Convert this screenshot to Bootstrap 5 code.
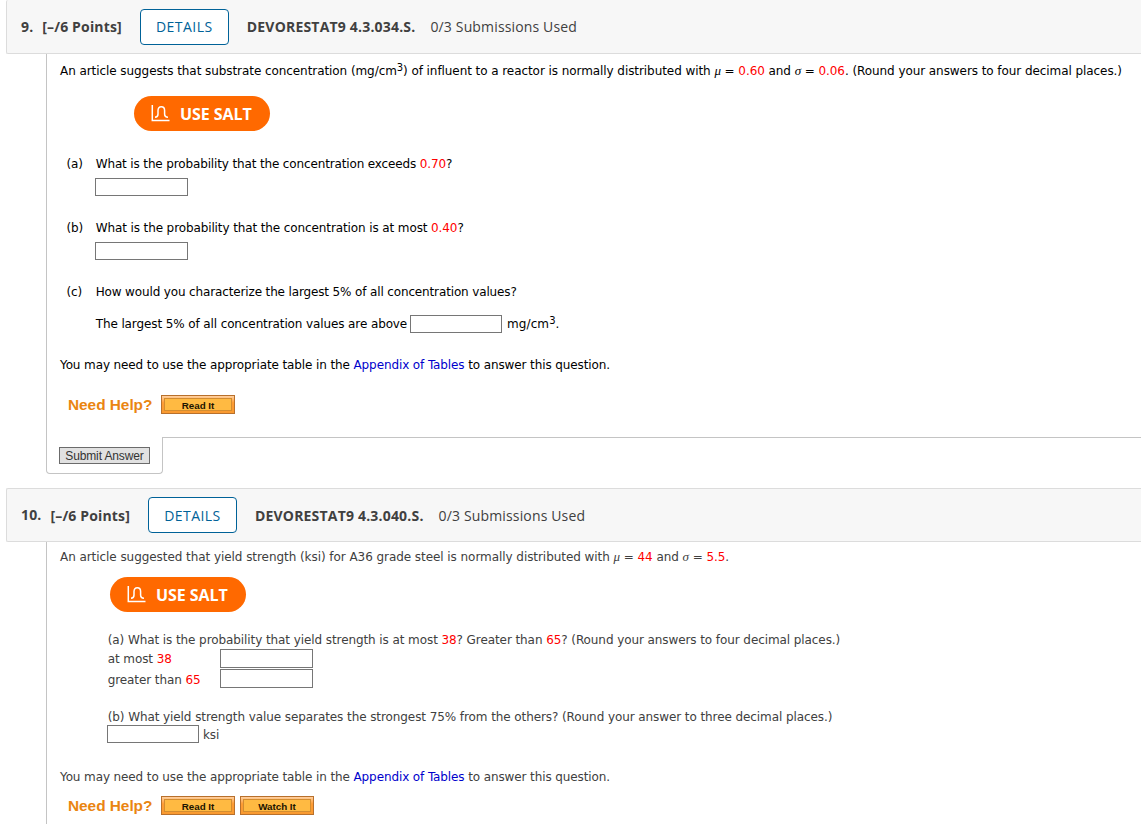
<!DOCTYPE html>
<html lang="en">
<head>
    <meta charset="UTF-8">
    <meta name="viewport" content="width=device-width, initial-scale=1.0">
    <title>Homework - Section 4.3</title>
    <!-- Bootstrap CSS -->
    <link href="https://cdn.jsdelivr.net/npm/bootstrap@5.3.0/dist/css/bootstrap.min.css" rel="stylesheet">
    <style>
        body {
            font-family: "DejaVu Sans", Verdana, sans-serif;
            font-size: 12px;
            line-height: 20px;
            color: #000;
            height: 824px;
            overflow: hidden;
        }
        .question {
            margin-left: 6px;
            white-space: nowrap;
        }
        .question-head {
            height: 54px;
            padding-left: 14px;
            background-color: #f7f7f7;
            border: 1px solid #dcdcdc;
            border-right: 0;
            border-radius: 2px 0 0 2px;
            font-family: "Open Sans", sans-serif;
            font-size: 14px;
            letter-spacing: .15px;
            color: #404040;
        }
        .question-first .question-head {
            border-top: 0;
        }
        .question-second .q-points,
        .question-second .q-code,
        .question-second .q-used {
            padding-top: 2px;
        }
        .q-num {
            margin-right: 9px;
        }
        .q-points {
            margin-right: 18px;
        }
        .btn-details {
            width: 89px;
            height: 36px;
            padding: 0;
            margin-right: 18px;
            border: 1px solid #006298;
            border-radius: 4px;
            background-color: #fff;
            color: #006298;
            font-size: 14px;
            letter-spacing: .45px;
        }
        .q-code {
            margin-right: 15px;
            letter-spacing: .19px;
        }
        .question-body {
            margin-left: 40px;
            padding-left: 13px;
            border-left: 1px solid #c4c4c4;
            letter-spacing: -.11px;
        }
        .body-first {
            height: 383px;
            padding-top: 7px;
        }
        .body-second {
            height: 282px;
            padding-top: 5px;
            color: #404040;
        }
        .stem-first {
            letter-spacing: -.07px;
        }
        .stem-second {
            letter-spacing: -.06px;
        }
        .val {
            color: #f00;
        }
        .sym {
            font-family: "Liberation Serif", serif;
            font-style: italic;
            font-size: 13px;
        }
        .unit-sup {
            font-size: 10px;
            line-height: 0;
            top: -.4em;
        }
        .question-body a {
            color: #00c;
            text-decoration: none;
        }
        .btn-salt {
            width: 136px;
            height: 35px;
            padding: 0 0 0 16.5px;
            border: 0;
            border-radius: 18px;
            background-color: #ff6900;
            color: #fff;
            font-family: "Open Sans", sans-serif;
            font-size: 16px;
            font-weight: 700;
            letter-spacing: -.05px;
        }
        .btn-salt svg {
            margin-right: 10px;
        }
        .salt-first {
            margin: 15px 0 23px 74.4px;
        }
        .salt-second {
            margin: 10px 0 18px 50.4px;
        }
        .part {
            margin: 0 0 22px 6px;
        }
        .part-label {
            width: 29px;
            padding-left: .5px;
        }
        .part-text {
            padding-left: .7px;
        }
        .part-a-text {
            letter-spacing: -.14px;
        }
        .part-c-text {
            letter-spacing: -.14px;
        }
        .part-c-line {
            margin-top: 12px;
        }
        .part-c-lead {
            width: 315px;
            padding-left: .7px;
        }
        .part-c-line .answer {
            margin-top: 1px;
            margin-right: 5px;
        }
        .part-c-unit {
            letter-spacing: .1px;
        }
        .note-first {
            margin-top: 21px;
        }
        .help-first {
            margin-top: 20px;
        }
        .answer {
            display: block;
            width: 93px;
            height: 18px;
            padding: 0;
            border: 1px solid #767676;
            border-radius: 0;
            background-color: #fff;
        }
        .answer-inline {
            width: 92px;
        }
        .answer-tall {
            height: 19px;
        }
        .sub-parts {
            margin-left: 47px;
            letter-spacing: -.085px;
        }
        .row-label {
            width: 113px;
            padding-left: .7px;
        }
        .row-most {
            height: 20px;
            margin-top: -1px;
        }
        .row-greater .row-label {
            padding-top: 1px;
        }
        .sub-b {
            margin-top: 17px;
        }
        .sub-b-line {
            margin-top: -2px;
        }
        .note-second {
            margin-top: 22px;
        }
        .help-second {
            margin-top: 9px;
        }
        .need-help {
            width: 101px;
            padding-left: 8px;
            font-family: "Liberation Sans", Arial, sans-serif;
            font-size: 15.4px;
            font-weight: 700;
            line-height: 19px;
            letter-spacing: -.03px;
            color: #ea8511;
        }
        .btn-help {
            width: 74px;
            height: 19px;
            padding: 2px;
            margin-right: 5px;
            border: 1px solid #b8702c;
            border-radius: 0;
            background: linear-gradient(#ffd0a0, #ff9c33 40%, #f99a30);
        }
        .btn-help span {
            display: block;
            height: 13px;
            border: 1px solid #d38d30;
            background-color: #ffba42;
            color: #1c1400;
            font-family: "Liberation Sans", Arial, sans-serif;
            font-size: 9.8px;
            font-weight: 700;
            line-height: 13px;
            letter-spacing: 0;
        }
        .submit-row {
            height: 37px;
            margin: 0 0 14px 40px;
        }
        .submit-tab {
            width: 117px;
            padding: 10px 0 0 12px;
            border: 1px solid #c4c4c4;
            border-top: 0;
            border-radius: 0 0 4px 4px;
        }
        .submit-line {
            border-top: 1px solid #c4c4c4;
        }
        .btn-submit {
            display: block;
            width: 91px;
            height: 17px;
            padding: 1px 0 0;
            border: 1px solid #6b6b6b;
            border-radius: 0;
            background-color: #e1e1e1;
            color: #333;
            font-family: "Liberation Sans", Arial, sans-serif;
            font-size: 12px;
            line-height: 15px;
            letter-spacing: -.12px;
        }
    </style>
</head>
<body>
    <!-- Question 9 -->
    <section class="question question-first">
        <div class="question-head d-flex align-items-center">
            <strong class="q-num">9.</strong>
            <strong class="q-points">[–/6 Points]</strong>
            <button type="button" class="btn btn-details">DETAILS</button>
            <strong class="q-code">DEVORESTAT9 4.3.034.S.</strong>
            <span class="q-used">0/3 Submissions Used</span>
        </div>
        <div class="question-body body-first">
            <div class="stem-first">An article suggests that substrate concentration (mg/cm<sup class="unit-sup">3</sup>) of influent to a reactor is normally distributed with <span class="sym">μ</span> = <span class="val">0.60</span> and <span class="sym">σ</span> = <span class="val">0.06</span>. (Round your answers to four decimal places.)</div>
            <button type="button" class="btn btn-salt salt-first d-flex align-items-center">
                <svg width="19" height="17" viewBox="0 0 19 17" fill="none" stroke="#fff" stroke-width="1.5"><path d="M1.300 0V15.500H18.500M4 12.200C6 12.200 7 11 7 9V5.500C7 3 8.200 1.800 10.300 1.800S13.600 3 13.600 5.500V9C13.600 11 14.800 12.200 17 12.200"/></svg>
                USE SALT
            </button>
            <div class="part d-flex">
                <div class="part-label">(a)</div>
                <div>
                    <div class="part-text part-a-text">What is the probability that the concentration exceeds <span class="val">0.70</span>?</div>
                    <input type="text" class="answer mt-1" aria-label="Part a">
                </div>
            </div>
            <div class="part d-flex">
                <div class="part-label">(b)</div>
                <div>
                    <div class="part-text">What is the probability that the concentration is at most <span class="val">0.40</span>?</div>
                    <input type="text" class="answer mt-1" aria-label="Part b">
                </div>
            </div>
            <div class="part d-flex mb-0">
                <div class="part-label">(c)</div>
                <div>
                    <div class="part-text part-c-text">How would you characterize the largest 5% of all concentration values?</div>
                    <div class="d-flex part-c-line">
                        <span class="part-c-lead">The largest 5% of all concentration values are above</span>
                        <input type="text" class="answer answer-inline" aria-label="Part c">
                        <span class="part-c-unit">mg/cm<sup class="unit-sup">3</sup>.</span>
                    </div>
                </div>
            </div>
            <div class="note-first">You may need to use the appropriate table in the <a href="#">Appendix of Tables</a> to answer this question.</div>
            <div class="help-first d-flex">
                <div class="need-help">Need Help?</div>
                <button type="button" class="btn btn-help"><span>Read It</span></button>
            </div>
        </div>
        <div class="submit-row d-flex">
            <div class="submit-tab">
                <button type="button" class="btn btn-submit">Submit Answer</button>
            </div>
            <div class="submit-line flex-grow-1"></div>
        </div>
    </section>

    <!-- Question 10 -->
    <section class="question question-second">
        <div class="question-head d-flex align-items-center">
            <strong class="q-num">10.</strong>
            <strong class="q-points">[–/6 Points]</strong>
            <button type="button" class="btn btn-details">DETAILS</button>
            <strong class="q-code">DEVORESTAT9 4.3.040.S.</strong>
            <span class="q-used">0/3 Submissions Used</span>
        </div>
        <div class="question-body body-second">
            <div class="stem-second">An article suggested that yield strength (ksi) for A36 grade steel is normally distributed with <span class="sym">μ</span> = <span class="val">44</span> and <span class="sym">σ</span> = <span class="val">5.5</span>.</div>
            <button type="button" class="btn btn-salt salt-second d-flex align-items-center">
                <svg width="19" height="17" viewBox="0 0 19 17" fill="none" stroke="#fff" stroke-width="1.5"><path d="M1.300 0V15.500H18.500M4 12.200C6 12.200 7 11 7 9V5.500C7 3 8.200 1.800 10.300 1.800S13.600 3 13.600 5.500V9C13.600 11 14.800 12.200 17 12.200"/></svg>
                USE SALT
            </button>
            <div class="sub-parts">
                <div class="part-text">(a) What is the probability that yield strength is at most <span class="val">38</span>? Greater than <span class="val">65</span>? (Round your answers to four decimal places.)</div>
                <div class="d-flex row-most">
                    <div class="row-label">at most <span class="val">38</span></div>
                    <input type="text" class="answer answer-tall" aria-label="At most 38">
                </div>
                <div class="d-flex row-greater">
                    <div class="row-label">greater than <span class="val">65</span></div>
                    <input type="text" class="answer answer-tall" aria-label="Greater than 65">
                </div>
                <div class="sub-b part-text">(b) What yield strength value separates the strongest 75% from the others? (Round your answer to three decimal places.)</div>
                <div class="d-flex sub-b-line">
                    <input type="text" class="answer answer-inline me-1" aria-label="Part b">
                    <span>ksi</span>
                </div>
            </div>
            <div class="note-second">You may need to use the appropriate table in the <a href="#">Appendix of Tables</a> to answer this question.</div>
            <div class="d-flex help-second">
                <div class="need-help">Need Help?</div>
                <button type="button" class="btn btn-help"><span>Read It</span></button>
                <button type="button" class="btn btn-help"><span>Watch It</span></button>
            </div>
        </div>
    </section>

    <!-- Bootstrap JS -->
    <script src="https://cdn.jsdelivr.net/npm/bootstrap@5.3.0/dist/js/bootstrap.bundle.min.js"></script>
</body>
</html>
